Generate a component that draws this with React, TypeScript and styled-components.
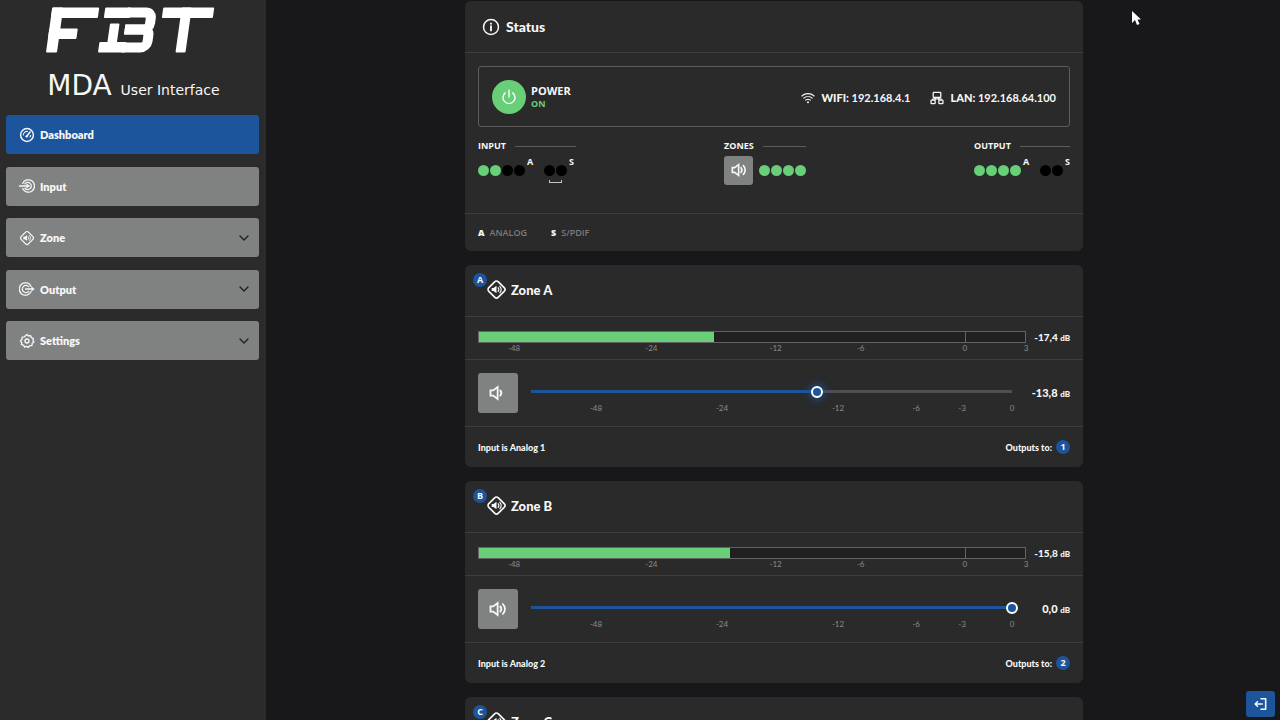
import React, { useState } from "react";
import styled, { createGlobalStyle, css } from "styled-components";

const c = {
  page: "#18181b",
  panel: "#2a2a2a",
  line: "#3d3d3d",
  grey: "#808282",
  blue: "#1c559c",
  green: "#68ce78",
  white: "#f7f7f7",
  muted: "#8b8b8b",
};

const GlobalStyle = createGlobalStyle`
  * { box-sizing: border-box; }
  body { margin: 0; background: ${c.page}; color: ${c.white}; font-family: Lato, "Liberation Sans", sans-serif; font-size: 11px; font-weight: 700; }
  button, input { font: inherit; color: inherit; margin: 0; }
  h1, h2, p, dl, dd, ul { margin: 0; padding: 0; font-size: inherit; }
  svg { display: block; flex: none; }
`;

/* ---------- icons ---------- */

const Icon = styled.svg.attrs({ viewBox: "0 0 24 24", "aria-hidden": true })<{ $size: number; $stroke?: number }>`
  width: ${(p) => p.$size}px;
  height: ${(p) => p.$size}px;
  fill: none;
  stroke: currentColor;
  stroke-width: ${(p) => p.$stroke ?? 2};
  stroke-linecap: round;
  stroke-linejoin: round;
`;

const GaugeIcon = () => (
  <Icon $size={16} $stroke={2.2}>
    <circle cx="12" cy="12" r="9.6" />
    <path d="M6.5 12a5.500 5.500 0 0 1 6-5.400M17.500 12.500a5.500 5.500 0 0 1-1 2.500" strokeWidth="1.600" />
    <path d="m12 13.500 4.500-6" strokeWidth="2.400" />
    <circle cx="11.500" cy="14" r="1.800" fill="currentColor" stroke="none" />
  </Icon>
);

const InputIcon = () => (
  <Icon $size={16} $stroke={1.9}>
    <path d="M5.500 8.200A9.300 9.300 0 1 1 5.500 15.800M8.800 8.700a5.400 5.400 0 1 1 0 6.600" />
    <path d="M0 12h13" />
    <path d="m12 9.300 4 2.700-4 2.700z" fill="currentColor" strokeWidth="1" />
  </Icon>
);

const OutputIcon = () => (
  <Icon $size={16} $stroke={1.9}>
    <path d="M18.200 8.200A9.300 9.300 0 1 0 18.200 15.800M14.500 8.500a5.400 5.400 0 1 0 0 7" />
    <path d="M10 12h10" />
    <path d="m19.500 9.500 3.500 2.500-3.500 2.500z" fill="currentColor" strokeWidth="1" />
  </Icon>
);

const ZoneIcon = ({ size }: { size: number }) => (
  <Icon $size={size} $stroke={1.9}>
    <rect x="4.300" y="4.300" width="15.400" height="15.400" rx="3" transform="rotate(45 12 12)" />
    <path d="M6.500 10.300h2L12 7.800v8.400l-3.500-2.500h-2z" fill="currentColor" stroke="none" />
    <path d="M13.800 9.800c1 1.200 1 3.200 0 4.400M15.800 8.300c1.900 2.200 1.900 5.200 0 7.400" strokeWidth="1.300" />
  </Icon>
);

const GearIcon = () => (
  <Icon $size={16} $stroke={2}>
    <path d="M12 2.200l2.300 2.300 3.200-.5 1 3 3 1.200-.6 3.300 1.500 2-2.600 2-.4 3.200-3.300.3-2 2.600-2.600-1.600-3 1.200-1.700-2.900-3.200-.8.500-3.200-2-2.500L4.500 9.500l.2-3.300 3.200-.5z" />
    <circle cx="12" cy="12" r="3" />
  </Icon>
);

const InfoIcon = () => (
  <Icon $size={18} $stroke={2}>
    <circle cx="12" cy="12" r="10" />
    <path d="M12 11v5.500M12 7.300v.4" strokeWidth="2.500" />
  </Icon>
);

const PowerIcon = () => (
  <Icon $size={18} $stroke={1.8}>
    <path d="M12 3v9M7 6.500a8 8 0 1 0 10 0" />
  </Icon>
);

const WifiIcon = () => (
  <Icon $size={14} $stroke={1.9}>
    <path d="M1.500 8.500a16 16 0 0 1 21 0M4.800 12.200a11 11 0 0 1 14.400 0M8 15.700a6.300 6.300 0 0 1 8 0" />
    <circle cx="12" cy="19.200" r="1.700" fill="currentColor" stroke="none" />
  </Icon>
);

const LanIcon = () => (
  <Icon $size={14} $stroke={2.2}>
    <rect x="5.500" y="2.500" width="13" height="8.500" rx="1" />
    <path d="M9 11v3.500M15 11v3.500M5 15v-1.500h14V15" />
    <rect x="1.800" y="15.500" width="7" height="6" rx="1" />
    <rect x="15.200" y="15.500" width="7" height="6" rx="1" />
  </Icon>
);

const VolumeIcon = ({ size, full }: { size: number; full?: boolean }) => (
  <Icon $size={size} $stroke={2.4}>
    <path d="M2 8.500h3.500L11.500 4v16l-6-4.500H2z" strokeLinejoin="miter" />
    <path d="M15 8.500c1.700 2 1.700 5 0 7" />
    {full && <path d="M18.500 5.500c3.700 3.600 3.700 9.400 0 13" />}
  </Icon>
);

const ChevronIcon = () => (
  <Icon $size={12} $stroke={2.6}>
    <path d="m4 8 8 8 8-8" />
  </Icon>
);

const ExitIcon = () => (
  <Icon $size={14} $stroke={2.6}>
    <path d="M12 3h8v18h-8M14 12H2M6 8l-4 4 4 4" />
  </Icon>
);

const FbtMark = () => (
  <svg width="170" height="46" viewBox="45 6.500 170 46" role="img" aria-label="FBT" fill="#fff">
    <defs>
      <clipPath id="bowls">
        <rect x="121.500" y="0" width="40" height="60" />
      </clipPath>
    </defs>
    <g transform="translate(7.280 0) skewX(-8)">
      <rect x="46" y="7" width="47" height="10.500" rx="1" />
      <rect x="46" y="7" width="11" height="45" rx="1" />
      <rect x="46" y="28" width="28.500" height="10.500" rx="1" />
      <rect x="99" y="7" width="26" height="10.500" rx="1" />
      <rect x="106" y="23" width="9.500" height="28" rx="1" />
      <rect x="98" y="41.500" width="27" height="10.500" rx="1" />
      <g clipPath="url(#bowls)" fill="none" stroke="#fff" strokeWidth="10">
        <rect x="105" y="12" width="41" height="17" rx="6" />
        <rect x="105" y="29" width="41" height="18" rx="6" />
      </g>
      <rect x="157" y="7" width="51" height="10.500" rx="1" />
      <rect x="175.500" y="7" width="10" height="45" rx="1" />
    </g>
  </svg>
);

/* ---------- sidebar ---------- */

const Shell = styled.div`
  display: grid;
  grid-template-columns: 266px minmax(0, 1fr);
  column-gap: 2px;
  height: 100vh;
  overflow: hidden;
`;

const Sidebar = styled.aside`
  background: #2b2b2b;
  padding: 7px 7px 0 6px;
`;

const Brand = styled.header`
  display: flex;
  flex-direction: column;
  align-items: center;
  height: 108px;
  padding-right: 6px;
`;

const Product = styled.h1`
  margin: 16px 0 0 8px;
  font: 400 28px/34px "DejaVu Sans", sans-serif;
  white-space: nowrap;
  small { font-size: 14px; }
`;

const Menu = styled.nav`
  display: grid;
  grid-auto-rows: 39px;
  align-content: space-between;
  height: 245px;
  font-size: 11px;
  font-weight: 800;
`;

const entry = css`
  display: flex;
  align-items: center;
  gap: 5px;
  padding: 0 9px 0 13px;
  border: 0;
  border-radius: 3px;
  color: ${c.white};
  text-decoration: none;
  text-align: left;
  cursor: pointer;
`;
const MenuLink = styled.a<{ $active?: boolean }>`
  ${entry}
  background: ${(p) => (p.$active ? c.blue : c.grey)};
`;
const MenuButton = styled.button`
  ${entry}
  background: ${c.grey};
  > svg:last-child { margin-left: auto; color: #1d1d1d; }
`;

/* ---------- cards ---------- */

const Main = styled.main`
  overflow-y: auto;
  scrollbar-width: none;
  padding: 1px 12px 14px;
`;

const Stack = styled.div`
  display: flex;
  flex-direction: column;
  gap: 14px;
  max-width: 618px;
  margin: 0 auto;
`;

const Card = styled.section`
  background: ${c.panel};
  border-radius: 6px;
`;

const CardHeader = styled.header`
  position: relative;
  display: flex;
  align-items: center;
  gap: 6px;
  height: 52px;
  padding-left: 17px;
  border-bottom: 1px solid ${c.line};
`;

const CardTitle = styled.h2<{ $zone?: boolean }>`
  font-size: ${(p) => (p.$zone ? 13 : 14)}px;
  line-height: 18px;
  font-weight: 900;
`;

const StatusBody = styled.div`
  height: 161px;
  padding: 13px 13px 0;
  border-bottom: 1px solid ${c.line};
`;

const PowerPanel = styled.div`
  display: flex;
  align-items: center;
  height: 61px;
  padding: 0 13px;
  border: 1px solid #5c5c5c;
  border-radius: 3px;
`;

const PowerButton = styled.button`
  display: grid;
  place-items: center;
  width: 34px;
  height: 34px;
  padding: 0;
  border: 0;
  border-radius: 50%;
  background: ${c.green};
  color: #fff;
`;

const PowerText = styled.p`
  margin-left: 5px;
  font: 700 11px/14px "Open Sans", sans-serif;
  small { display: block; font-size: 9px; line-height: 12px; color: ${c.green}; }
`;

const Networks = styled.ul`
  display: flex;
  gap: 20px;
  margin-left: auto;
  padding-top: 2px;
  list-style: none;
`;
const Network = styled.li`
  display: flex;
  align-items: center;
  gap: 6px;
  b { font-weight: 900; }
`;

const Groups = styled.div`
  display: grid;
  grid-template-columns: minmax(0, 246fr) minmax(0, 250fr) minmax(0, 96fr);
  margin-top: 12px;
`;
const Legend = styled.h3<{ $width: number }>`
  display: flex;
  align-items: center;
  gap: 9px;
  width: ${(p) => p.$width}px;
  margin: 0;
  font: 700 9px/14px "Open Sans", sans-serif;
  &::after { content: ""; flex: 1; height: 1px; background: #5c5c5c; }
`;
const GroupRow = styled.div`
  display: flex;
  align-items: center;
  height: 34px;
  gap: 6px;
`;
const DotSet = styled.div<{ $second?: boolean }>`
  position: relative;
  display: flex;
  gap: 1px;
  margin-left: ${(p) => (p.$second ? 3 : 0)}px;
`;
const Dot = styled.i<{ $on?: boolean }>`
  width: 11px;
  height: 11px;
  border-radius: 50%;
  background: ${(p) => (p.$on ? c.green : "#000")};
`;
const DotTag = styled.sup`
  width: 8px;
  margin: -9px 0 0 1px;
  font: 700 9px/12px "Open Sans", sans-serif;
`;
const LinkMark = styled.i`
  position: absolute;
  left: 5px;
  top: 15px;
  width: 13px;
  height: 3px;
  border: 1px solid #c4c4c4;
  border-top: 0;
`;

const MuteButton = styled.button<{ $size: number }>`
  display: grid;
  place-items: center;
  flex: none;
  width: ${(p) => p.$size}px;
  height: ${(p) => p.$size}px;
  padding: 0;
  border: 0;
  border-radius: 3px;
  background: ${c.grey};
`;

const KeyRow = styled.footer`
  display: flex;
  align-items: center;
  gap: 24px;
  height: 37px;
  padding: 0 13px;
  font: 600 9px/14px "Open Sans", sans-serif;
  color: #7c7c7c;
  b { margin-right: 5px; font-weight: 800; color: ${c.white}; }
`;

/* ---------- zones ---------- */

const Badge = styled.span<{ $corner?: boolean }>`
  display: grid;
  place-items: center;
  width: 14px;
  height: 14px;
  border-radius: 50%;
  background: ${c.blue};
  font: 700 9px/14px "Open Sans", sans-serif;
  ${(p) => p.$corner && css`position: absolute; left: 8px; top: 8px;`}
`;

const ZoneHeader = styled(CardHeader)`
  padding: 0 0 2px 21px;
  gap: 4px;
`;

const MeterRow = styled.div`
  display: grid;
  grid-template-columns: 1fr 44px;
  height: 43px;
  padding: 14px 13px 0;
  border-bottom: 1px solid ${c.line};
`;

const Meter = styled.div`
  position: relative;
  height: 12px;
  border: 1px solid #646464;
  background: #202020;
  &::after { content: ""; position: absolute; left: 89%; top: 0; bottom: 0; width: 1px; background: #646464; }
`;
const MeterFill = styled.div`
  height: 100%;
  background: ${c.green};
`;

const Scale = styled.div<{ $columns: string }>`
  display: grid;
  grid-template-columns: ${(p) => p.$columns};
  color: ${c.muted};
  font-size: 8px;
  font-weight: 400;
  line-height: 10px;
`;
const Tick = styled.span`
  display: flex;
  justify-content: center;
  justify-self: end;
  width: 0;
  white-space: nowrap;
`;

const Level = styled.output<{ $large?: boolean }>`
  text-align: right;
  white-space: nowrap;
  font-size: ${(p) => (p.$large ? 11 : 10)}px;
  font-weight: 900;
  line-height: 12px;
  small { font-size: 8px; }
`;

const FaderRow = styled.div`
  display: grid;
  grid-template-columns: 40px 1fr 52px;
  align-items: center;
  height: 67px;
  padding: 0 13px;
  border-bottom: 1px solid ${c.line};
`;
const FaderColumn = styled.div`
  padding: 12px 0 0 7px;
`;
const Fader = styled.input<{ $glow: boolean }>`
  appearance: none;
  display: block;
  width: 100%;
  height: 13px;
  outline: 0;
  background:
    linear-gradient(${c.blue}, ${c.blue}) 6px 5px / calc((100% - 12px) * var(--level)) 3px no-repeat,
    linear-gradient(#4f4f4f, #4f4f4f) 6px 5px / calc(100% - 12px) 3px no-repeat;
  &::-webkit-slider-thumb {
    appearance: none;
    width: 12px;
    height: 12px;
    border: 2px solid #fff;
    border-radius: 50%;
    background: ${c.blue};
    box-shadow: ${(p) => (p.$glow ? "0 0 8px 1px #1c559c" : "none")};
  }
`;
const FaderScale = styled(Scale)`
  margin: 5px 6px 0;
`;

const ZoneFooter = styled.footer`
  display: flex;
  justify-content: space-between;
  align-items: center;
  height: 40px;
  padding: 0 13px;
  font-size: 9px;
  font-weight: 900;
`;
const Outputs = styled.span`
  display: flex;
  align-items: center;
  gap: 4px;
`;

const ExitButton = styled.button`
  position: fixed;
  right: 5px;
  bottom: 3px;
  display: grid;
  place-items: center;
  width: 29px;
  height: 26px;
  padding: 0;
  border: 0;
  border-radius: 3px;
  background: ${c.blue};
`;
const Pointer = styled.svg`
  position: fixed;
  left: 1131px;
  top: 11px;
`;

type DotsProps = { states: boolean[]; tag?: string; linked?: boolean; second?: boolean };

const Dots = ({ states, tag, linked, second }: DotsProps) => (
  <DotSet $second={second}>
    {states.map((on, i) => <Dot key={i} $on={on} />)}
    {tag && <DotTag>{tag}</DotTag>}
    {linked && <LinkMark />}
  </DotSet>
);

type ZoneData = { id: string; meter: number; meterDb: string; level: number; faderDb: string; n: number };

const zones: ZoneData[] = [
  { id: "A", meter: 43, meterDb: "-17,4", level: 594, faderDb: "-13,8", n: 1 },
  { id: "B", meter: 46, meterDb: "-15,8", level: 1000, faderDb: "0,0", n: 2 },
  { id: "C", meter: 40, meterDb: "-18,2", level: 1000, faderDb: "0,0", n: 3 },
];

function Zone({ zone }: { zone: ZoneData }) {
  const [level, setLevel] = useState(zone.level);
  return (
    <Card>
      <ZoneHeader>
        <Badge $corner>{zone.id}</Badge>
        <ZoneIcon size={21} />
        <CardTitle $zone>Zone {zone.id}</CardTitle>
      </ZoneHeader>
      <MeterRow>
        <div>
          <Meter role="meter" aria-label={`Zone ${zone.id} level`} aria-valuenow={zone.meter}>
            <MeterFill style={{ width: `${zone.meter}%` }} />
          </Meter>
          <Scale $columns="36fr 137fr 124fr 85fr 104fr 61fr">
            {["-48", "-24", "-12", "-6", "0", "3"].map((t) => <Tick key={t}>{t}</Tick>)}
          </Scale>
        </div>
        <Level>{zone.meterDb} <small>dB</small></Level>
      </MeterRow>
      <FaderRow>
        <MuteButton $size={40} aria-label={`Mute zone ${zone.id}`}>
          <VolumeIcon size={18} full={zone.level === 1000} />
        </MuteButton>
        <FaderColumn>
          <Fader
            type="range"
            min={0}
            max={1000}
            value={level}
            aria-label={`Zone ${zone.id} volume`}
            $glow={zone.id === "A"}
            onChange={(e) => setLevel(Number(e.target.value))}
            style={{ "--level": level / 1000 } as React.CSSProperties}
          />
          <FaderScale $columns="65fr 126fr 116fr 78fr 46fr 50fr">
            {["-48", "-24", "-12", "-6", "-3", "0"].map((t) => <Tick key={t}>{t}</Tick>)}
          </FaderScale>
        </FaderColumn>
        <Level $large>{zone.faderDb} <small>dB</small></Level>
      </FaderRow>
      <ZoneFooter>
        <span>Input is Analog {zone.n}</span>
        <Outputs>Outputs to: <Badge>{zone.n}</Badge></Outputs>
      </ZoneFooter>
    </Card>
  );
}

export default function App() {
  return (
    <>
      <GlobalStyle />
      <Shell>
        <Sidebar>
          <Brand>
            <FbtMark />
            <Product>MDA <small>User Interface</small></Product>
          </Brand>
          <Menu aria-label="Main">
            <MenuLink href="#dashboard" $active><GaugeIcon />Dashboard</MenuLink>
            <MenuLink href="#input"><InputIcon />Input</MenuLink>
            <MenuButton><ZoneIcon size={16} />Zone<ChevronIcon /></MenuButton>
            <MenuButton><OutputIcon />Output<ChevronIcon /></MenuButton>
            <MenuButton><GearIcon />Settings<ChevronIcon /></MenuButton>
          </Menu>
        </Sidebar>
        <Main>
          <Stack>
            <Card>
              <CardHeader>
                <InfoIcon />
                <CardTitle>Status</CardTitle>
              </CardHeader>
              <StatusBody>
                <PowerPanel>
                  <PowerButton aria-label="Power"><PowerIcon /></PowerButton>
                  <PowerText>POWER<small>ON</small></PowerText>
                  <Networks>
                    <Network><WifiIcon /><span><b>WIFI:</b> 192.168.4.1</span></Network>
                    <Network><LanIcon /><span><b>LAN:</b> 192.168.64.100</span></Network>
                  </Networks>
                </PowerPanel>
                <Groups>
                  <div>
                    <Legend $width={98}>INPUT</Legend>
                    <GroupRow>
                      <Dots states={[true, true, false, false]} tag="A" />
                      <Dots states={[false, false]} tag="S" linked second />
                    </GroupRow>
                  </div>
                  <div>
                    <Legend $width={82}>ZONES</Legend>
                    <GroupRow>
                      <MuteButton $size={29} aria-label="Mute all zones"><VolumeIcon size={16} full /></MuteButton>
                      <Dots states={[true, true, true, true]} />
                    </GroupRow>
                  </div>
                  <div>
                    <Legend $width={96}>OUTPUT</Legend>
                    <GroupRow>
                      <Dots states={[true, true, true, true]} tag="A" />
                      <Dots states={[false, false]} tag="S" second />
                    </GroupRow>
                  </div>
                </Groups>
              </StatusBody>
              <KeyRow>
                <span><b>A</b>ANALOG</span>
                <span><b>S</b>S/PDIF</span>
              </KeyRow>
            </Card>
            {zones.map((z) => <Zone key={z.id} zone={z} />)}
          </Stack>
        </Main>
      </Shell>
      <ExitButton aria-label="Log out"><ExitIcon /></ExitButton>
      <Pointer width="11" height="16" viewBox="0 0 11 16" aria-hidden="true">
        <path d="M1 0v12l3-3 2 5 2.500-1-2-4.500H10z" fill="#fff" />
      </Pointer>
    </>
  );
}
